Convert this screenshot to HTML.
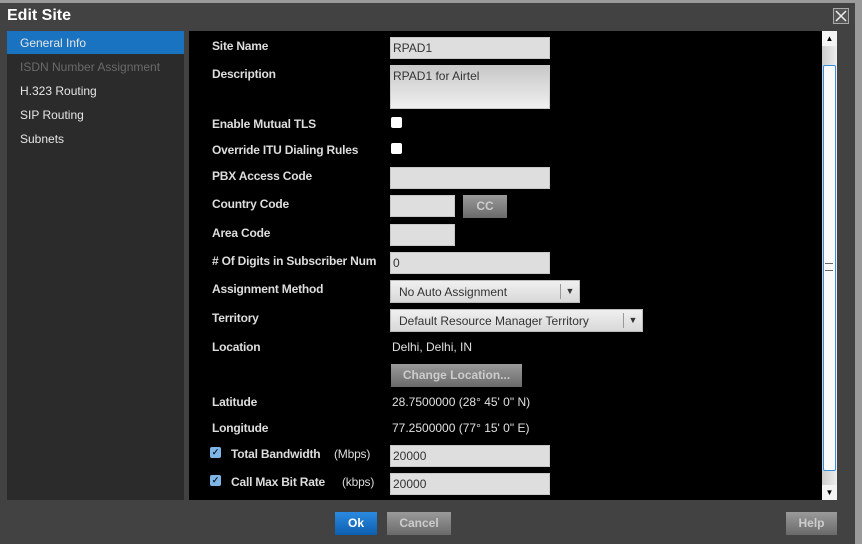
<!DOCTYPE html>
<html><head><meta charset="utf-8"><style>
*{margin:0;padding:0;box-sizing:border-box}
body{width:862px;height:544px;background:#9a9a9a;font-family:"Liberation Sans",Arial,sans-serif;position:relative;overflow:hidden}
.dlg{position:absolute;left:0;top:3px;width:855px;height:541px;background:#424242}
.a{position:absolute}
.title{left:7px;top:4px;color:#fff;font-weight:bold;font-size:16px}
.close{left:833px;top:5px;width:16px;height:16px;border:1px solid #aaa;background:#555}
.side{left:7px;top:28px;width:177px;height:469px;background:#2b2b2b}
.si{position:absolute;left:13px;font-size:12px;color:#e6e6e6}
.sel{left:0;top:0;width:177px;height:23px;background:#1a73c0}
.main{left:189px;top:28px;width:633px;height:469px;background:#000}
.lb{position:absolute;left:23px;font-size:12px;font-weight:bold;color:#ddd;letter-spacing:-0.2px}
.in{position:absolute;left:201px;background:#dedede;border:1px solid #c8c8c8;font-size:12px;color:#333;padding:3px 2px}
.cb{position:absolute;left:202px;width:11px;height:11px;background:#fff;border-radius:2px}
.cbc{position:absolute;left:21px;width:11px;height:11px;background:#7fb6e6;border-radius:2px;color:#123;font-size:9px;line-height:11px;text-align:center;font-weight:bold}
.txt{position:absolute;left:203px;font-size:12px;color:#e0e0e0}
.sel2{position:absolute;left:201px;height:23px;background:linear-gradient(#f0f0f0,#d8d8d8);border:1px solid #bbb;font-size:12px;color:#333;padding:4px 8px}
.sel2 .arr{position:absolute;right:0;top:3px;width:19px;height:15px;border-left:1px solid #999;font-size:9px;text-align:center;line-height:15px}
.btn{position:absolute;background:linear-gradient(#9a9a9a,#6a6a6a);color:#ccc;font-size:12px;font-weight:bold;text-align:center}
.scroll{left:822px;top:28px;width:15px;height:469px;background:linear-gradient(90deg,#ccc,#eee)}
</style></head><body>
<div class="dlg">
<div class="a title">Edit Site</div>
<div class="a close"><svg width="14" height="14" viewBox="0 0 14 14"><path d="M2 2L12 12M12 2L2 12" stroke="#eee" stroke-width="1.5"/></svg></div>
<div class="a side">
<div class="a sel"></div>
<div class="si" style="top:5px">General Info</div>
<div class="si" style="top:29px;color:#6a6a6a">ISDN Number Assignment</div>
<div class="si" style="top:53px">H.323 Routing</div>
<div class="si" style="top:77px">SIP Routing</div>
<div class="si" style="top:101px">Subnets</div>
</div>
<div class="a main">
<div class="lb" style="top:8px">Site Name</div>
<div class="in" style="top:6px;width:160px;height:22px">RPAD1</div>
<div class="lb" style="top:36px">Description</div>
<div class="in" style="top:34px;width:160px;height:44px;background:linear-gradient(#c8c8c8,#f0f0f0)">RPAD1 for Airtel</div>
<div class="lb" style="top:86px">Enable Mutual TLS</div>
<div class="cb" style="top:86px"></div>
<div class="lb" style="top:112px">Override ITU Dialing Rules</div>
<div class="cb" style="top:112px"></div>
<div class="lb" style="top:138px">PBX Access Code</div>
<div class="in" style="top:136px;width:160px;height:22px"></div>
<div class="lb" style="top:166px">Country Code</div>
<div class="in" style="top:164px;width:65px;height:22px"></div>
<div class="btn" style="left:274px;top:164px;width:44px;height:23px;line-height:23px">CC</div>
<div class="lb" style="top:195px">Area Code</div>
<div class="in" style="top:193px;width:65px;height:22px"></div>
<div class="lb" style="top:223px">#&nbsp;Of Digits in Subscriber Num</div>
<div class="in" style="top:221px;width:160px;height:22px">0</div>
<div class="lb" style="top:251px">Assignment Method</div>
<div class="sel2" style="top:249px;width:190px">No Auto Assignment<div class="arr">▼</div></div>
<div class="lb" style="top:280px">Territory</div>
<div class="sel2" style="top:278px;width:253px">Default Resource Manager Territory<div class="arr">▼</div></div>
<div class="lb" style="top:309px">Location</div>
<div class="txt" style="top:309px">Delhi, Delhi, IN</div>
<div class="btn" style="left:202px;top:333px;width:131px;height:23px;line-height:23px">Change Location...</div>
<div class="lb" style="top:364px">Latitude</div>
<div class="txt" style="top:364px">28.7500000 (28° 45' 0" N)</div>
<div class="lb" style="top:390px">Longitude</div>
<div class="txt" style="top:390px">77.2500000 (77° 15' 0" E)</div>
<div class="cbc" style="top:416px">✓</div>
<div class="lb" style="left:42px;top:416px">Total Bandwidth</div>
<div class="lb" style="left:145px;top:416px;font-weight:normal">(Mbps)</div>
<div class="in" style="top:414px;width:160px;height:22px">20000</div>
<div class="cbc" style="top:444px">✓</div>
<div class="lb" style="left:42px;top:444px">Call Max Bit Rate</div>
<div class="lb" style="left:153px;top:444px;font-weight:normal">(kbps)</div>
<div class="in" style="top:442px;width:160px;height:22px">20000</div>
</div>
<div class="a scroll">
<div class="a" style="left:0;top:0;width:15px;height:15px;background:#f4f4f4;font-size:8px;text-align:center;line-height:15px">▲</div>
<div class="a" style="left:1px;top:34px;width:13px;height:406px;background:#fafafa;border:1px solid #3a8ee0;border-radius:2px"></div>
<div class="a" style="left:3px;top:232px;width:8px;height:8px;border-top:1px solid #666;border-bottom:1px solid #666"></div>
<div class="a" style="left:0;top:454px;width:15px;height:15px;background:#f4f4f4;font-size:8px;text-align:center;line-height:15px">▼</div>
</div>
<div class="btn" style="left:335px;top:509px;width:42px;height:23px;line-height:23px;background:linear-gradient(#2a8ae0,#0e5fb0);color:#fff">Ok</div>
<div class="btn" style="left:387px;top:509px;width:64px;height:23px;line-height:23px">Cancel</div>
<div class="btn" style="left:786px;top:509px;width:51px;height:23px;line-height:23px">Help</div>
</div>
</body></html>
